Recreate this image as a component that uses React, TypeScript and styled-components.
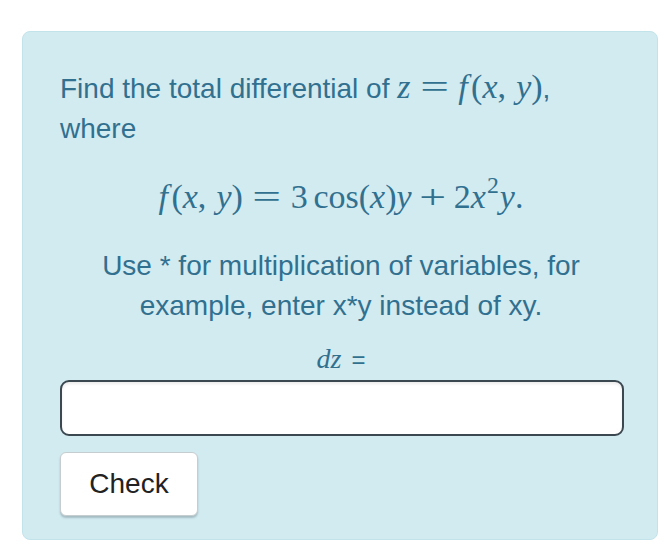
import styled, { createGlobalStyle } from "styled-components"

const GlobalStyle = createGlobalStyle`
  html, body {
    margin: 0;
    padding: 0;
    background: #fff;
  }
  body {
    font-family: "Liberation Sans", Arial, sans-serif;
  }
`

export default function App() {
  return (
    <>
      <GlobalStyle />
      <Page>
        <Alert>
          <Prompt>
            Find the total differential of{" "}
            <InlineMath>
              <Mi>z</Mi>
              <Rel>=</Rel>
              <Mi $kern>f</Mi>
              <Mn>(</Mn>
              <Mi>x</Mi>
              <Comma>,</Comma>
              <Mi>y</Mi>
              <Mn>)</Mn>
            </InlineMath>
            ,
            <br />
            where
          </Prompt>
          <DisplayMath>
            <Mi $kern>f</Mi>
            <Mn>(</Mn>
            <Mi>x</Mi>
            <Comma>,</Comma>
            <Mi>y</Mi>
            <Mn>)</Mn>
            <Rel>=</Rel>
            <Mn>3</Mn>
            <Fn>cos</Fn>
            <Mn>(</Mn>
            <Mi>x</Mi>
            <Mn>)</Mn>
            <Mi>y</Mi>
            <Bin>+</Bin>
            <Mn>2</Mn>
            <Mi>x</Mi>
            <Sup>2</Sup>
            <Mi>y</Mi>
            <Mn>.</Mn>
          </DisplayMath>
          <Hint>
            Use * for multiplication of variables, for
            <br />
            example, enter x*y instead of xy.
          </Hint>
          <AnswerLabel>
            <Mi>d</Mi>
            <Mi>z</Mi>
            <LabelEq>=</LabelEq>
          </AnswerLabel>
          <AnswerInput type="text" aria-label="dz" />
          <CheckButton type="button">Check</CheckButton>
        </Alert>
      </Page>
    </>
  )
}

const Page = styled.div`
  padding: 31px 6px 7px 22px;
`

const Alert = styled.div`
  box-sizing: border-box;
  width: 636px;
  height: 509px;
  padding: 37px 35px 0 37px;
  background-color: #d2ebf1;
  border: 1px solid #c3e3ea;
  border-radius: 8px;
  color: #31708f;
  display: flex;
  flex-direction: column;
`

const Prompt = styled.p`
  margin: 0;
  font-size: 28px;
  line-height: 40px;
`

const InlineMath = styled.span`
  font-family: "Liberation Serif", "Times New Roman", serif;
  font-size: 34px;
  line-height: 1;
`

const Mi = styled.span<{ $kern?: boolean }>`
  font-family: "Liberation Serif", "Times New Roman", serif;
  font-style: italic;
  margin-right: ${(p) => (p.$kern ? "0.1em" : "0")};
`

const Mn = styled.span`
  font-family: "Liberation Serif", "Times New Roman", serif;
`

const Fn = styled.span`
  font-family: "Liberation Serif", "Times New Roman", serif;
  margin-left: 0.17em;
`

const Comma = styled.span`
  font-family: "Liberation Serif", "Times New Roman", serif;
  margin-right: 0.3em;
`

const Rel = styled.span`
  display: inline-block;
  font-family: "Liberation Serif", "Times New Roman", serif;
  transform: scaleX(1.5);
  margin: 0 0.42em;
`

const Bin = styled.span`
  display: inline-block;
  font-family: "Liberation Serif", "Times New Roman", serif;
  transform: scaleX(1.4);
  margin: 0 0.34em;
`

const Sup = styled.sup`
  font-family: "Liberation Serif", "Times New Roman", serif;
  font-size: 0.7em;
  line-height: 0;
  vertical-align: 0.62em;
  margin: 0 1px 0 1px;
`

const DisplayMath = styled.div`
  margin: 23px 0 0;
  text-align: center;
  font-size: 34px;
  line-height: 48px;
  white-space: nowrap;
`

const Hint = styled.p`
  margin: 25px 0 0;
  text-align: center;
  font-size: 28px;
  line-height: 40px;
`

const AnswerLabel = styled.div`
  margin-top: 13px;
  text-align: center;
  font-family: "Liberation Serif", "Times New Roman", serif;
  font-size: 28px;
  line-height: 40px;
`

const LabelEq = styled.span`
  font-family: "Liberation Sans", Arial, sans-serif;
  font-size: 24px;
  padding-left: 10px;
`

const AnswerInput = styled.input`
  box-sizing: border-box;
  margin-top: 0;
  width: 564px;
  height: 56px;
  border: 2px solid #3c4850;
  border-radius: 9px;
  background: #fff;
  box-shadow: inset 0 2px 3px rgba(0, 0, 0, 0.08);
  outline: none;
  font-size: 24px;
  padding: 0 12px;
`

const CheckButton = styled.button`
  box-sizing: border-box;
  margin-top: 16px;
  width: 138px;
  height: 64px;
  border: 1px solid #c6cdd0;
  border-radius: 6px;
  background: #fff;
  box-shadow: 0 2px 2px rgba(80, 100, 110, 0.35);
  color: #222;
  font-family: "Liberation Sans", Arial, sans-serif;
  font-size: 28px;
  cursor: pointer;
`
